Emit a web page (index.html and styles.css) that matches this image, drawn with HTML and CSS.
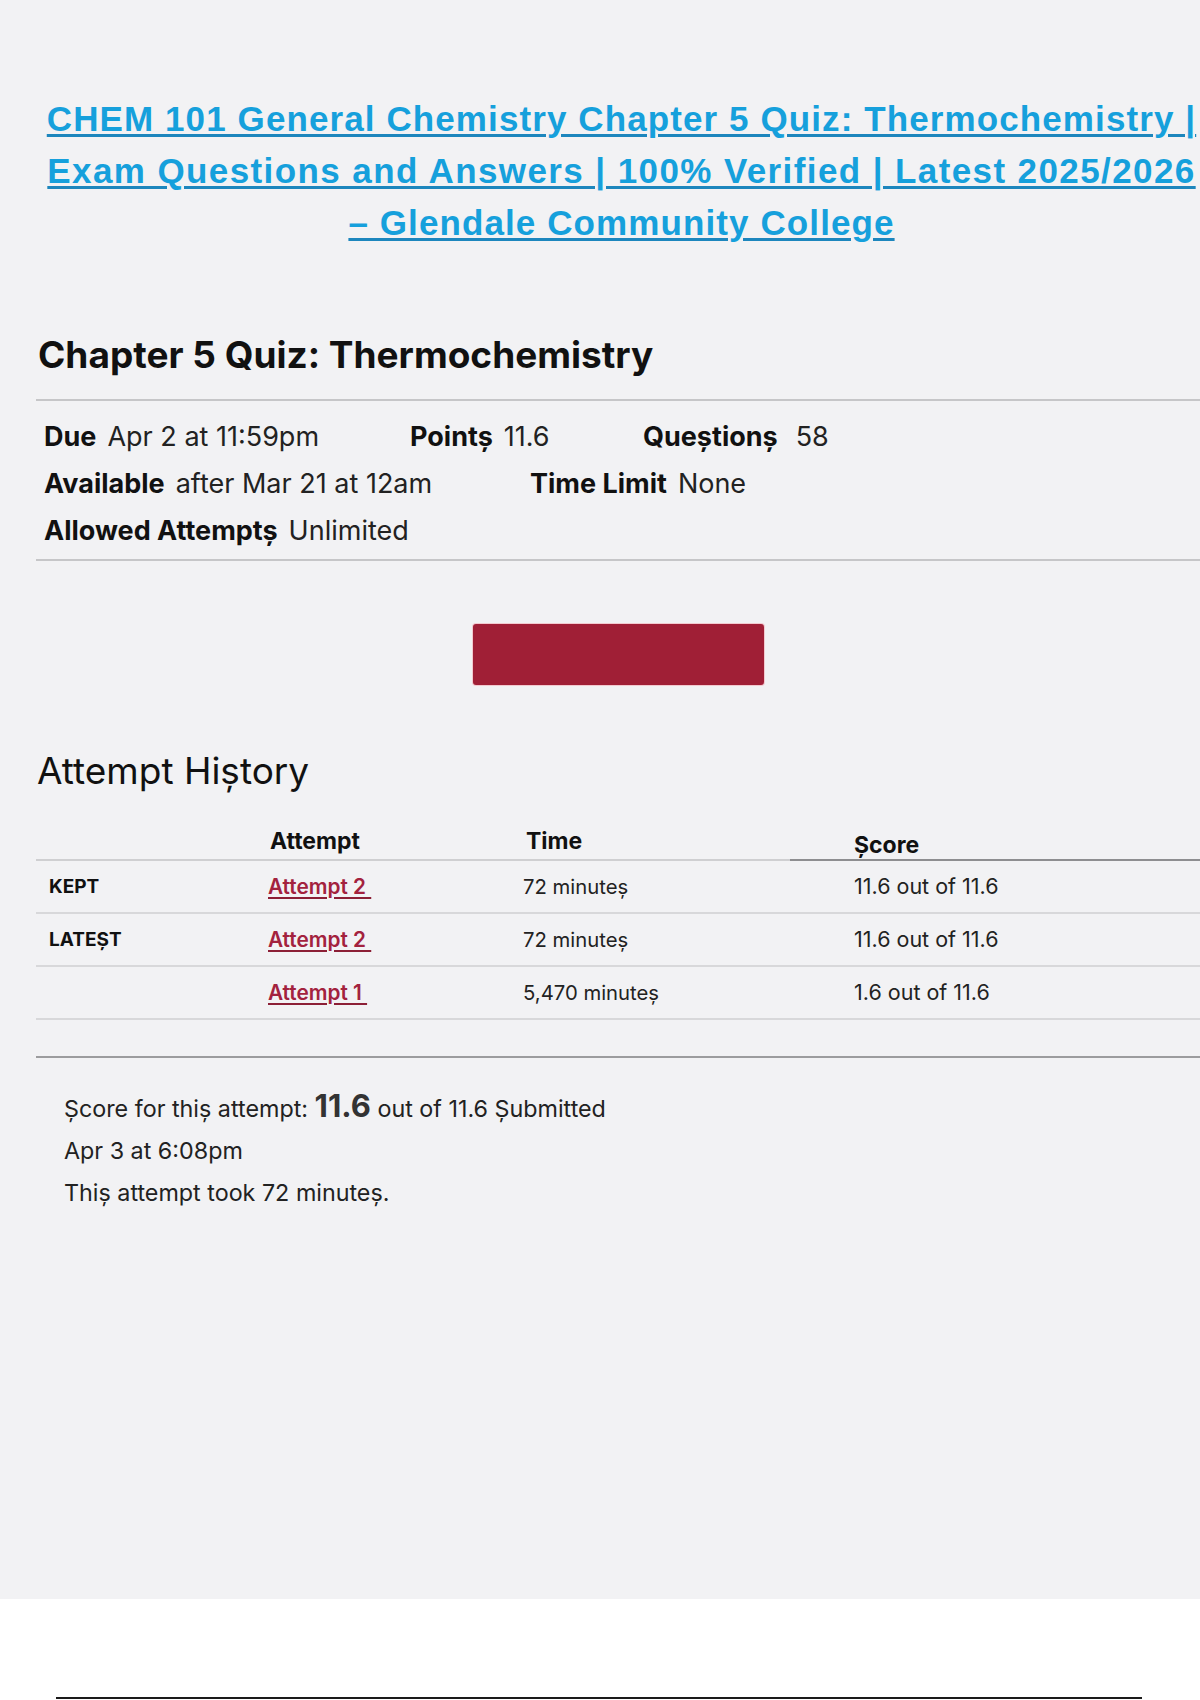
FILE: index.html
```html
<!DOCTYPE html>
<html lang="en">
<head>
<meta charset="utf-8">
<title>Chapter 5 Quiz: Thermochemistry</title>
<link rel="stylesheet" href="styles.css">
</head>
<body>
<div class="page">
  <div class="content">
    <h1 class="doc-title"><a href="#">CHEM 101 General Chemistry Chapter 5 Quiz: Thermochemistry |<br><span class="line2">Exam Questions and Answers | 100% Verified | Latest 2025/2026</span><br>– Glendale Community College</a></h1>

    <h2 class="quiz-title">Chapter 5 Quiz: Thermochemistry</h2>

    <div class="meta">
      <div class="meta-row">
        <div class="meta-item w-due"><span class="label">Due</span><span class="value">Apr 2 at 11:59pm</span></div>
        <div class="meta-item w-points"><span class="label">Pointș</span><span class="value">11.6</span></div>
        <div class="meta-item"><span class="label label-wide">Queștionș</span><span class="value">58</span></div>
      </div>
      <div class="meta-row">
        <div class="meta-item w-avail"><span class="label">Available</span><span class="value">after Mar 21 at 12am</span></div>
        <div class="meta-item"><span class="label">Time Limit</span><span class="value">None</span></div>
      </div>
      <div class="meta-row">
        <div class="meta-item"><span class="label">Allowed Attemptș</span><span class="value">Unlimited</span></div>
      </div>
    </div>

    <div class="btn-wrap"><div class="btn"></div></div>

    <h3 class="history-title">Attempt Hiștory</h3>

    <div class="table">
      <div class="tr th">
        <div class="c c1"></div>
        <div class="c c2">Attempt</div>
        <div class="c c3">Time</div>
        <div class="c c4 score-h">Școre</div>
      </div>
      <div class="tr">
        <div class="c c1 tag">KEPT</div>
        <div class="c c2"><a href="#" class="att">Attempt 2&nbsp;</a></div>
        <div class="c c3">72 minuteș</div>
        <div class="c c4">11.6 out of 11.6</div>
      </div>
      <div class="tr">
        <div class="c c1 tag">LATEȘT</div>
        <div class="c c2"><a href="#" class="att">Attempt 2&nbsp;</a></div>
        <div class="c c3">72 minuteș</div>
        <div class="c c4">11.6 out of 11.6</div>
      </div>
      <div class="tr">
        <div class="c c1 tag"></div>
        <div class="c c2"><a href="#" class="att">Attempt 1&nbsp;</a></div>
        <div class="c c3">5,470 minuteș</div>
        <div class="c c4">1.6 out of 11.6</div>
      </div>
    </div>

    <div class="divider"></div>

    <div class="summary">
      <p>Școre for thiș attempt: <strong>11.6</strong> out of 11.6 Șubmitted</p>
      <p>Apr 3 at 6:08pm</p>
      <p>Thiș attempt took 72 minuteș.</p>
    </div>
  </div>
</div>
<div class="footer"><div class="footer-line"></div></div>
</body>
</html>
```
FILE: styles.css
```css
html, body {
  margin: 0;
  padding: 0;
  background: #ffffff;
}
body {
  font-family: Inter, Roboto, "Liberation Sans", Arial, sans-serif;
  color: #1c1c1c;
}
.page {
  background: #f2f2f4;
  height: 1599px;
  overflow: hidden;
}
.content {
  margin-left: 36px;
  width: 1164px;
  padding-top: 93px;
}
.doc-title {
  margin: 0;
  padding-left: 7px;
  font-family: "Liberation Sans", Arial, sans-serif;
  font-weight: 700;
  font-size: 35px;
  letter-spacing: 1.1px;
  line-height: 52px;
  text-align: center;
  white-space: nowrap;
}
.doc-title .line2 {
  letter-spacing: 1.4px;
}
.doc-title a {
  color: #16a0dc;
  text-decoration: underline;
  text-decoration-color: #1d86bd;
  text-decoration-thickness: 3px;
  text-underline-offset: 3px;
}
.quiz-title {
  margin: 84px 0 0 2px;
  font-size: 37px;
  line-height: 44px;
  font-weight: 700;
  color: #111;
}
.meta {
  margin-top: 22px;
  border-top: 2px solid #c6c6c8;
  border-bottom: 2px solid #c6c6c8;
  padding: 12px 0 5px 8px;
}
.meta-row {
  display: flex;
  font-size: 27px;
  line-height: 47px;
}
.meta-item {
  display: flex;
}
.w-due { width: 366px; }
.w-points { width: 233px; }
.w-avail { width: 486px; }
.label {
  font-weight: 700;
  color: #111;
  margin-right: 11px;
}
.label-wide { margin-right: 18px; }
.value {
  color: #222;
}
.btn-wrap {
  display: flex;
  justify-content: center;
  margin-top: 63px;
}
.btn {
  width: 291px;
  height: 61px;
  background: #a01f36;
  border-radius: 3px;
  box-shadow: 0 0 0 1px #f3c9cf;
}
.history-title {
  margin: 67px 0 0 1px;
  font-size: 37px;
  line-height: 38px;
  font-weight: 400;
  color: #111;
}
.table {
  margin-top: 29px;
}
.tr {
  display: grid;
  grid-template-columns: 219px 255px 280px 1fr;
  border-bottom: 2px solid #d8d8da;
}
.c {
  padding-left: 13px;
  font-size: 20.3px;
  line-height: 51px;
  color: #222;
  white-space: nowrap;
}
.c4 { padding-left: 64px; font-size: 21.5px; }
.th {
  border-bottom: none;
}
.th .c {
  font-size: 23px;
  font-weight: 700;
  color: #111;
  line-height: 24px;
  padding-top: 10px;
  padding-bottom: 6px;
  border-bottom: 2px solid #cfcfd1;
}
.th .c2 { padding-left: 15px; }
.th .c3 { padding-left: 16px; }
.th .score-h {
  padding-top: 14px;
  padding-bottom: 2px;
  border-bottom: 2px solid #8e8e90;
}
.tag {
  font-weight: 700;
  font-size: 19px;
  color: #111;
}
.att {
  color: #a3223e;
  font-weight: 600;
  font-size: 20.8px;
  text-decoration: underline;
  text-decoration-thickness: 2px;
  text-underline-offset: 3px;
  text-decoration-color: #8c1f36;
}
.divider {
  margin-top: 36px;
  border-top: 2px solid #9c9c9e;
}
.summary {
  padding: 29px 0 0 28px;
}
.summary p {
  margin: 0;
  font-size: 23.3px;
  line-height: 43px;
  color: #222;
}
.summary p + p {
  margin-top: -1px;
}
.summary strong {
  font-size: 31px;
  font-weight: 700;
  color: #333;
  line-height: 1;
}
.footer {
  height: 101px;
  display: flex;
  align-items: flex-end;
}
.footer-line {
  margin: 0 0 1px 56px;
  width: 1086px;
  height: 2px;
  background: #1a1a1a;
}
```
